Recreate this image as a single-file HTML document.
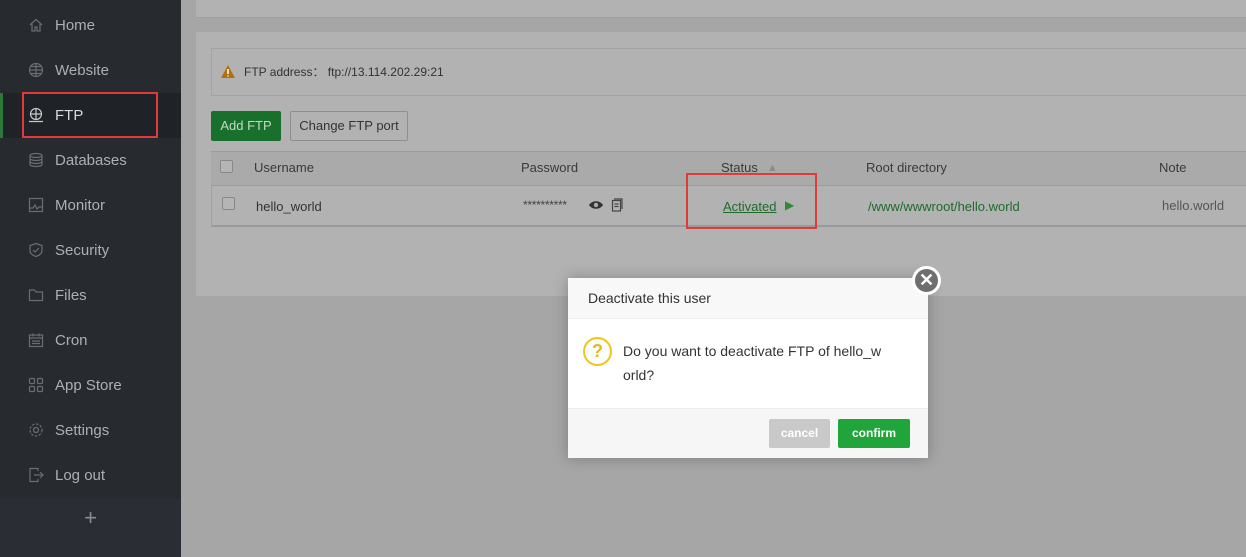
<!DOCTYPE html>
<html><head><meta charset="utf-8"><style>
*{margin:0;padding:0;box-sizing:border-box}
body{width:1246px;height:557px;overflow:hidden;background:#a6a6a6;font-family:"Liberation Sans",sans-serif;position:relative}
.sb{position:absolute;left:0;top:0;width:181px;height:557px;background:#272b30}
.it{position:absolute;left:0;width:181px;height:45px;color:#acafb3;font-size:15px;line-height:45px;padding-left:55px}
.it svg{position:absolute;left:28px;top:14px}
.act{background:#1f2226;color:#d8d8d8}
.abs{position:absolute}
</style></head><body>
<div class="sb">
<div class="it" style="top:3px"><svg width="16" height="16" viewBox="0 0 16 16" fill="none" stroke="#6a6e73" stroke-width="1.2"><path d="M2 8L8 2.5 14 8M4 7v7h3v-4h2v4h3V7"/></svg>Home</div>
<div class="it" style="top:48px"><svg width="16" height="16" viewBox="0 0 16 16" fill="none" stroke="#6a6e73" stroke-width="1.2"><circle cx="8" cy="8" r="6.5"/><path d="M1.5 8h13M8 1.5v13M3 4.5h10M3 11.5h10"/></svg>Website</div>
<div class="it act" style="top:93px"><svg width="16" height="16" viewBox="0 0 16 16" fill="none" stroke="#c8c8c8" stroke-width="1.2"><circle cx="8" cy="7" r="5.5"/><path d="M2.5 7h11M8 1.5v11M1 14.5h14"/></svg>FTP</div>
<div class="abs" style="left:0;top:93px;width:3px;height:45px;background:#2b7a3a"></div>
<div class="it" style="top:138px"><svg width="16" height="16" viewBox="0 0 16 16" fill="none" stroke="#6a6e73" stroke-width="1.2"><ellipse cx="8" cy="3.5" rx="6" ry="2"/><path d="M2 3.5v9c0 1.1 2.7 2 6 2s6-.9 6-2v-9M2 6.5c0 1.1 2.7 2 6 2s6-.9 6-2M2 9.5c0 1.1 2.7 2 6 2s6-.9 6-2"/></svg>Databases</div>
<div class="it" style="top:183px"><svg width="16" height="16" viewBox="0 0 16 16" fill="none" stroke="#6a6e73" stroke-width="1.2"><rect x="1.5" y="1.5" width="13" height="13"/><path d="M2 11h3l2-3 2 4 2-2h3"/></svg>Monitor</div>
<div class="it" style="top:228px"><svg width="16" height="16" viewBox="0 0 16 16" fill="none" stroke="#6a6e73" stroke-width="1.2"><path d="M8 1.5l6 2v5c0 3-3 5-6 6-3-1-6-3-6-6v-5z"/><path d="M5 8l2 2 4-4"/></svg>Security</div>
<div class="it" style="top:273px"><svg width="16" height="16" viewBox="0 0 16 16" fill="none" stroke="#6a6e73" stroke-width="1.2"><path d="M1.5 3h5l1.5 2h6.5v8.5h-13z"/></svg>Files</div>
<div class="it" style="top:318px"><svg width="16" height="16" viewBox="0 0 16 16" fill="none" stroke="#6a6e73" stroke-width="1.2"><rect x="1.5" y="3" width="13" height="11.5"/><path d="M1.5 6h13M5 1.5v3M11 1.5v3M4 9h8M4 11.5h8"/></svg>Cron</div>
<div class="it" style="top:363px"><svg width="16" height="16" viewBox="0 0 16 16" fill="none" stroke="#6a6e73" stroke-width="1.2"><rect x="1.5" y="1.5" width="5" height="5" rx="1"/><rect x="9.5" y="1.5" width="5" height="5" rx="1"/><rect x="1.5" y="9.5" width="5" height="5" rx="1"/><rect x="9.5" y="9.5" width="5" height="5" rx="1"/></svg>App Store</div>
<div class="it" style="top:408px"><svg width="16" height="16" viewBox="0 0 16 16" fill="none" stroke="#6a6e73" stroke-width="1.2"><circle cx="8" cy="8" r="2.5"/><circle cx="8" cy="8" r="6" stroke-dasharray="2.5 1.5"/></svg>Settings</div>
<div class="it" style="top:453px"><svg width="16" height="16" viewBox="0 0 16 16" fill="none" stroke="#6a6e73" stroke-width="1.2"><path d="M10 4V1.5H2v13h8V12M6 8h9M12 5l3 3-3 3"/></svg>Log out</div>
<div class="abs" style="left:0;top:498px;width:181px;height:59px;background:#2a2e34;color:#8a8d91;font-size:22px;text-align:center;line-height:40px">+</div>
</div>
<div class="abs" style="left:22px;top:92px;width:136px;height:46px;border:2px solid #e03a3a"></div>

<div class="abs" style="left:196px;top:0;width:1050px;height:18px;background:#b2b2b2;border-bottom:1px solid #a0a0a0"></div>
<div class="abs" style="left:196px;top:32px;width:1050px;height:264px;background:#b2b2b2"></div>
<div class="abs" style="left:211px;top:48px;width:1035px;height:48px;border:1px solid #a3a3a3;border-right:none;font-size:12px;color:#333;line-height:46px;padding-left:32px">FTP address：&nbsp;ftp://13.114.202.29:21</div>
<svg class="abs" style="left:221px;top:65px" width="14" height="13" viewBox="0 0 14 13"><path d="M7 0L14 13H0z" fill="#b0720f"/><path d="M7 4v5M7 10.5v1" stroke="#fff" stroke-width="1.5"/></svg>
<div class="abs" style="left:211px;top:111px;width:70px;height:30px;background:#19702c;border-radius:2px;color:#bfd9c4;font-size:13px;line-height:30px;text-align:center">Add FTP</div>
<div class="abs" style="left:290px;top:111px;width:118px;height:30px;border:1px solid #8e8e8e;border-radius:2px;color:#333;font-size:13px;line-height:28px;text-align:center">Change FTP port</div>
<div class="abs" style="left:211px;top:151px;width:1035px;height:35px;background:#aaaaaa;border-top:1px solid #9c9c9c;border-bottom:1px solid #9c9c9c"></div>
<div class="abs" style="left:211px;top:186px;width:1035px;height:41px;border-left:1px solid #a0a0a0;border-bottom:2px solid #9a9a9a"></div>
<div class="abs" style="left:220px;top:160px;width:13px;height:13px;border:1px solid #888;background:#b5b5b5;border-radius:2px"></div>
<div class="abs" style="left:222px;top:197px;width:13px;height:13px;border:1px solid #888;background:#b5b5b5;border-radius:2px"></div>
<div class="abs" style="top:160px;left:254px;font-size:13px;color:#3a3a3a">Username</div>
<div class="abs" style="top:160px;left:521px;font-size:13px;color:#3a3a3a">Password</div>
<div class="abs" style="top:160px;left:721px;font-size:13px;color:#3a3a3a">Status</div>
<div class="abs" style="top:162px;left:767px;font-size:11px;color:#8a8a8a">&#9650;</div>
<div class="abs" style="top:160px;left:866px;font-size:13px;color:#3a3a3a">Root directory</div>
<div class="abs" style="top:160px;left:1159px;font-size:13px;color:#3a3a3a">Note</div>
<div class="abs" style="top:199px;left:256px;font-size:13px;color:#333">hello_world</div>
<div class="abs" style="top:198px;left:523px;font-size:12px;color:#444;letter-spacing:-0.3px">**********</div>
<svg class="abs" style="left:589px;top:200px" width="14" height="10" viewBox="0 0 14 10"><path d="M0 5C3 0 11 0 14 5 11 10 3 10 0 5z" fill="#333"/><circle cx="7" cy="5" r="2.2" fill="#aaa"/></svg>
<svg class="abs" style="left:611px;top:198px" width="12" height="14" viewBox="0 0 12 14" fill="none" stroke="#444" stroke-width="1.2"><rect x="1.5" y="2.5" width="8" height="10.5"/><path d="M3 1h8v10M3.5 6h4M3.5 8.5h4"/></svg>
<div class="abs" style="top:199px;left:723px;font-size:13px;color:#1f6b2c;text-decoration:underline">Activated </div>
<div class="abs" style="top:198px;left:785px;font-size:12px;color:#2a8a3a">&#9654;</div>
<div class="abs" style="top:199px;left:868px;font-size:13px;color:#1f6b2c">/www/wwwroot/hello.world</div>
<div class="abs" style="top:198px;left:1162px;font-size:13px;color:#555">hello.world</div>
<div class="abs" style="left:686px;top:173px;width:131px;height:56px;border:2px solid #e03a3a"></div>

<div class="abs" style="left:568px;top:278px;width:360px;height:180px;background:#fff;box-shadow:0 0 14px rgba(0,0,0,.25)">
<div style="height:41px;background:#f8f8f8;border-bottom:1px solid #eee;font-size:14px;color:#333;line-height:41px;padding-left:20px">Deactivate this user</div>
<div style="height:89px;position:relative">
<div class="abs" style="left:15px;top:18px;width:29px;height:29px;border:2px solid #f0c419;border-radius:50%;color:#e8b80f;font-weight:bold;font-size:18px;text-align:center;line-height:25px">?</div>
<div class="abs" style="left:55px;top:20px;width:285px;font-size:14px;color:#333;line-height:24px">Do you want to deactivate FTP of hello_w<br>orld?</div>
</div>
<div style="height:50px;background:#f6f6f6;border-top:1px solid #eee;position:relative">
<div class="abs" style="left:201px;top:10px;width:61px;height:29px;background:#c9c9c9;border-radius:2px;color:#fff;font-weight:bold;font-size:12px;text-align:center;line-height:29px">cancel</div>
<div class="abs" style="left:270px;top:10px;width:72px;height:29px;background:#20a53a;border-radius:2px;color:#fff;font-weight:bold;font-size:12px;text-align:center;line-height:29px">confirm</div>
</div>
</div>
<div class="abs" style="left:912px;top:266px;width:29px;height:29px;border-radius:50%;background:#6f6f6f;border:3px solid #fff;color:#fff;font-size:18px;font-weight:bold;text-align:center;line-height:22px">&#10005;</div>
</body></html>
